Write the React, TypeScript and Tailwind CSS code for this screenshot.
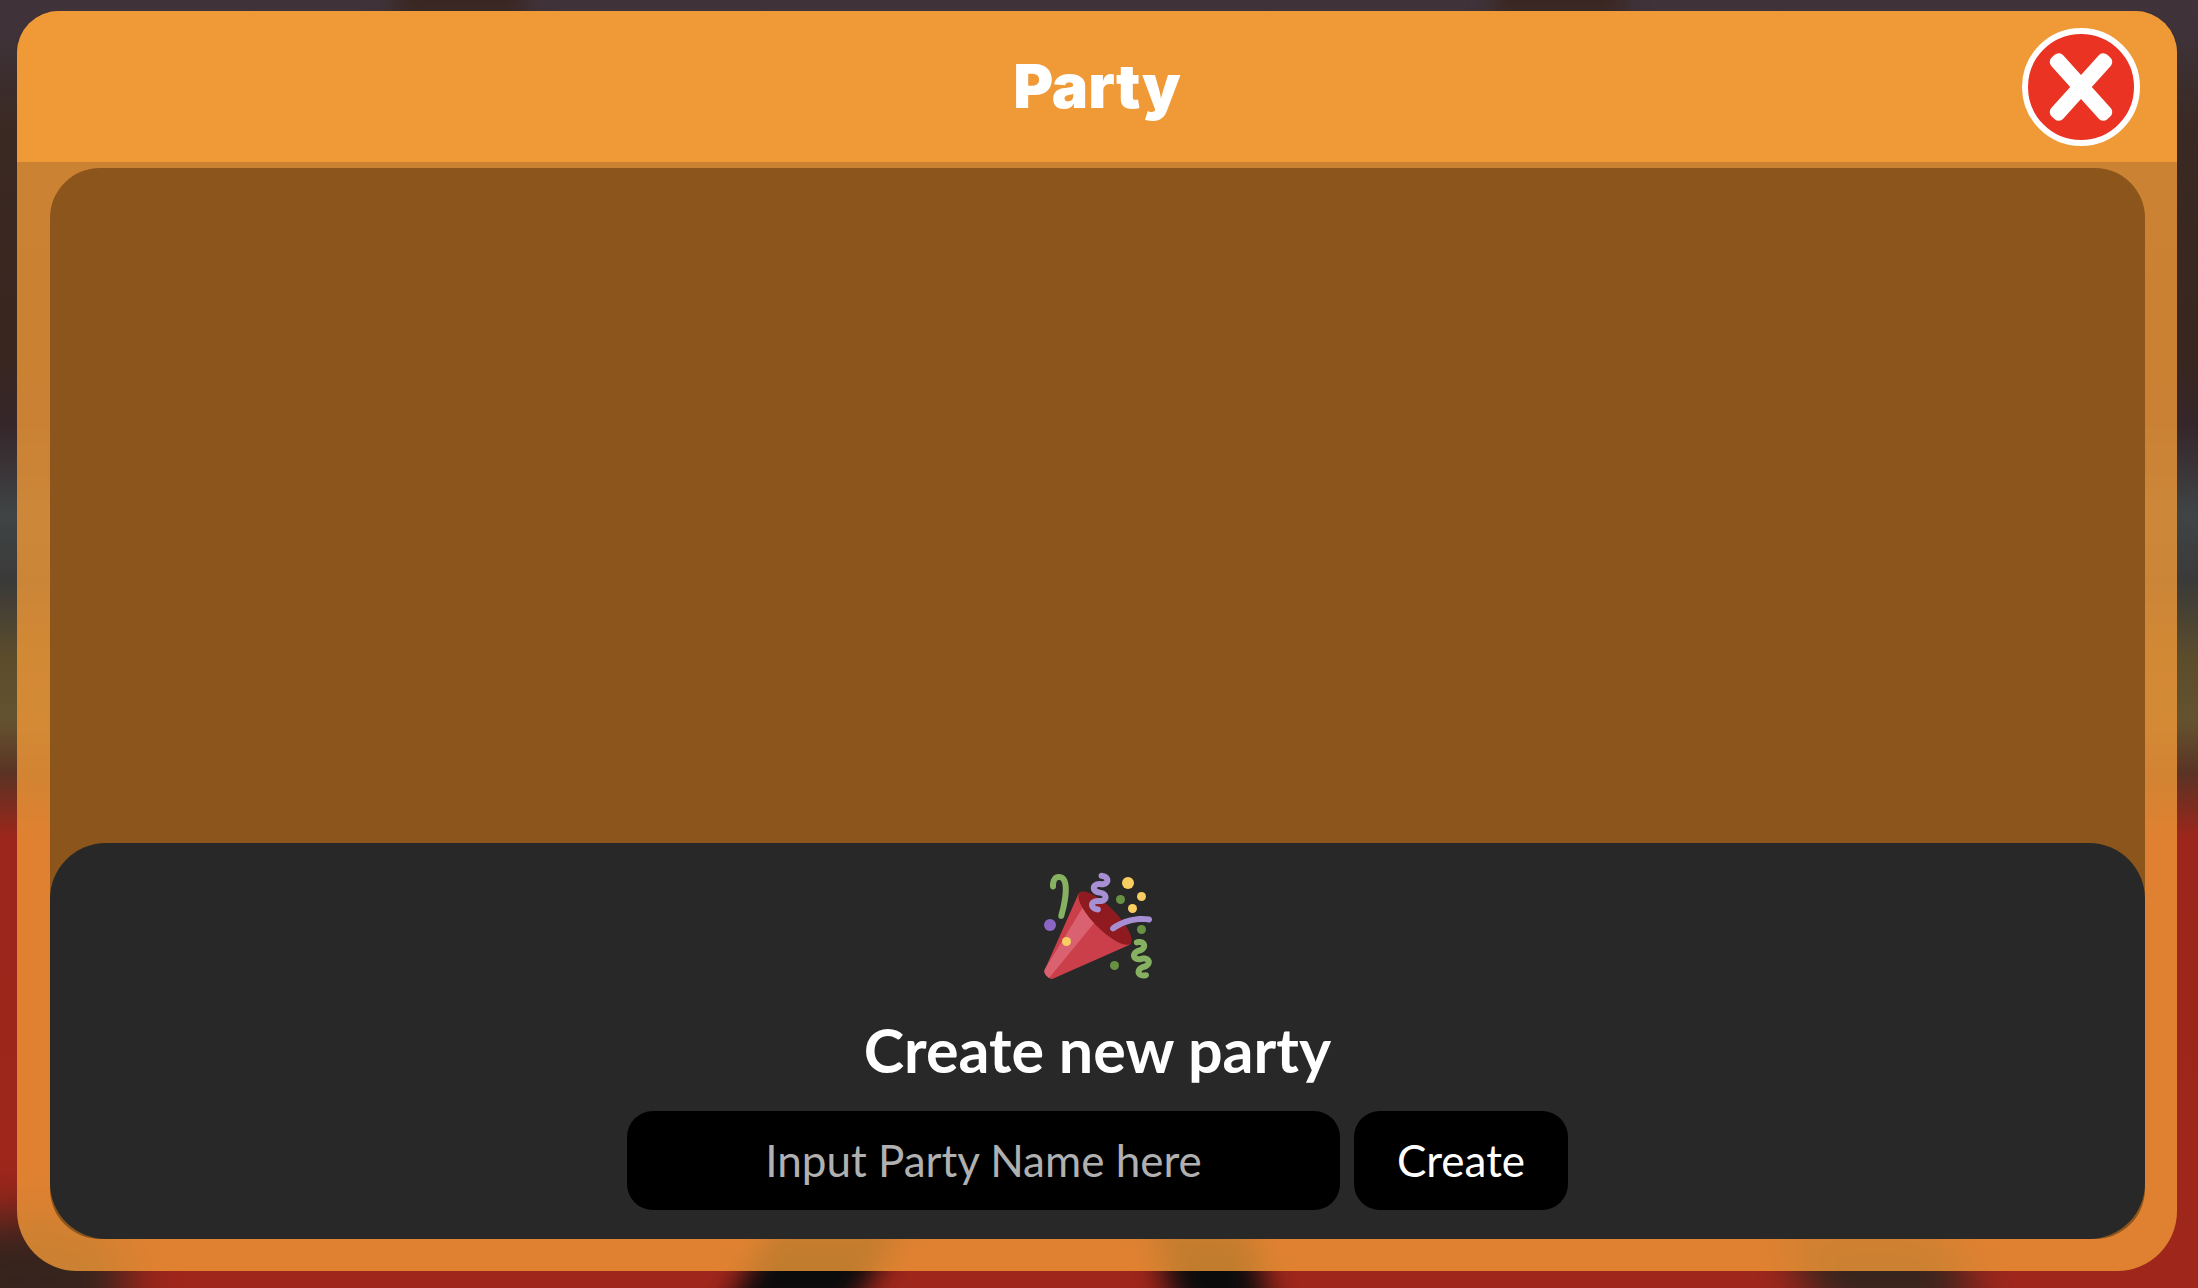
import React, { useState } from "react";

function CloseIcon() {
  return (
    <svg
      viewBox="-34 -34 68 68"
      className="size-[68px] shrink-0"
      fill="#fff"
      aria-hidden="true"
    >
      <rect x="-41.5" y="-8" width="83" height="16" rx="6" transform="rotate(48)" />
      <rect x="-41.5" y="-8" width="83" height="16" rx="6" transform="rotate(-48)" />
    </svg>
  );
}

function PartyPopper() {
  return (
    <svg viewBox="0 0 36 36" className="size-[108px]" aria-hidden="true">
      <path
        fill="#ca3f49"
        d="M11.626 7.488c-.112.112-.197.247-.268.395l-.008-.008L.134 33.141l.011.011c-.208.403.14 1.223.853 1.937.713.713 1.533 1.061 1.936.853l.01.01L28.21 24.735l-.008-.009c.147-.07.282-.155.395-.269 1.562-1.562-.971-6.627-5.656-11.313-4.687-4.686-9.752-7.218-11.315-5.656z"
      />
      <path
        fill="#da6270"
        d="M13 12L.416 32.506l-.282.635.011.011c-.208.403.14 1.223.853 1.937.232.232.473.408.709.557L17 17l-4-5z"
      />
      <path
        fill="#8f1b20"
        d="M23.012 13.066c4.67 4.672 7.263 9.652 5.789 11.124-1.473 1.474-6.453-1.118-11.126-5.788-4.671-4.672-7.263-9.654-5.79-11.127 1.474-1.473 6.454 1.119 11.127 5.791z"
      />
      <path
        fill="#a68fd3"
        d="M18.59 13.609c-.199.161-.459.245-.734.215-.868-.094-1.598-.396-2.109-.873-.541-.505-.808-1.183-.735-1.862.128-1.192 1.324-2.286 3.363-2.066.793.085 1.147-.17 1.159-.292.014-.121-.277-.446-1.07-.532-.868-.094-1.598-.396-2.11-.873-.541-.505-.809-1.183-.735-1.862.13-1.192 1.325-2.286 3.362-2.065.578.062.883-.057 1.012-.134.103-.063.144-.123.148-.158.012-.121-.275-.446-1.07-.532-.549-.06-.947-.552-.886-1.102.059-.549.55-.946 1.101-.886 2.037.219 2.973 1.542 2.844 2.735-.13 1.194-1.325 2.286-3.364 2.067-.578-.063-.88.057-1.01.134-.103.062-.145.123-.149.157-.013.122.276.446 1.071.532 2.037.22 2.973 1.542 2.844 2.735-.129 1.192-1.324 2.286-3.362 2.065-.578-.062-.882.058-1.012.134-.104.064-.144.124-.148.158-.013.121.276.446 1.07.532.548.06.947.553.886 1.102-.028.274-.167.511-.366.671z"
      />
      <path
        fill="#86b160"
        d="M30.661 22.857c1.973-.557 3.334.323 3.658 1.478.324 1.154-.378 2.615-2.35 3.17-.77.216-1.001.584-.97.701.034.118.425.312 1.193.095 1.972-.555 3.333.325 3.657 1.479.326 1.155-.378 2.614-2.351 3.17-.769.216-1.001.585-.967.702.033.117.423.311 1.192.095.53-.149 1.084.16 1.233.691.148.532-.161 1.084-.693 1.234-1.971.555-3.333-.323-3.659-1.479-.324-1.154.379-2.613 2.353-3.169.77-.217 1.001-.584.967-.702-.032-.117-.422-.312-1.19-.096-1.974.556-3.334-.322-3.659-1.479-.325-1.154.378-2.613 2.351-3.17.768-.215.999-.585.967-.701-.034-.118-.423-.312-1.192-.096-.532.15-1.083-.16-1.233-.691-.149-.53.161-1.082.693-1.232z"
      />
      <path
        fill="#a68fd3"
        d="M23.001 20.16c-.294 0-.584-.129-.782-.375-.345-.432-.274-1.061.156-1.406.218-.175 5.418-4.259 12.767-3.208.547.078.927.584.849 1.131-.078.546-.58.93-1.132.848-6.493-.922-11.187 2.754-11.233 2.791-.186.148-.406.219-.625.219z"
      />
      <path
        fill="#86b160"
        d="M5.754 16c-.095 0-.192-.014-.288-.042-.529-.159-.829-.716-.67-1.245 1.133-3.773 2.16-9.794.898-11.364-.141-.178-.354-.353-.842-.316-.938.072-.849 2.051-.848 2.071.042.551-.372 1.031-.922 1.072-.559.034-1.031-.372-1.072-.923-.103-1.379.326-4.035 2.692-4.214 1.056-.08 1.933.287 2.552 1.057 2.371 2.951-.036 11.506-.542 13.192-.13.433-.528.712-.958.712z"
      />
      <circle fill="#689243" cx="25.5" cy="9.5" r="1.5" />
      <circle fill="#8b66c5" cx="2" cy="18" r="2" />
      <circle fill="#689243" cx="32.5" cy="19.5" r="1.5" />
      <circle fill="#689243" cx="23.5" cy="31.5" r="1.5" />
      <circle fill="#f9ce61" cx="28" cy="4" r="2" />
      <circle fill="#f9ce61" cx="32.5" cy="8.5" r="1.5" />
      <circle fill="#f9ce61" cx="29.5" cy="12.5" r="1.5" />
      <circle fill="#f9ce61" cx="7.5" cy="23.5" r="1.5" />
    </svg>
  );
}

// Out of focus game scene behind the window
function Backdrop() {
  return (
    <div className="absolute inset-0 -z-10 overflow-hidden bg-[linear-gradient(#40333a_0%,#3e3238_3%,#3a2922_10%,#38261f_28%,#35262a_33%,#404445_40%,#3a3a39_45%,#5b4c2c_51%,#64522f_56%,#5a3324_60%,#9c261b_65%,#9f261b_100%)]">
      <div className="absolute -bottom-14 -left-16 h-32 w-48 rounded-full bg-[#35241d] blur-xl" />
      <div className="absolute -bottom-8 left-[34%] h-24 w-32 -skew-x-[30deg] bg-[#0b0b0c] blur-lg" />
      <div className="absolute -bottom-8 left-[53%] h-24 w-24 skew-x-[15deg] bg-[#0b0b0c] blur-lg" />
      <div className="absolute -bottom-8 left-[82%] h-24 w-40 skew-x-[20deg] bg-[#35241d] blur-xl" />
      <div className="absolute -top-4 left-[18%] h-8 w-32 bg-[#38241c] blur-md" />
      <div className="absolute -top-4 left-[68%] h-8 w-32 bg-[#38241c] blur-md" />
    </div>
  );
}

export default function App() {
  const [partyName, setPartyName] = useState("");

  return (
    <div className="relative isolate flex min-h-screen pt-[11px] pr-[21px] pb-[17px] pl-[17px] font-['Lato','Noto_Sans',sans-serif] text-white">
      <Backdrop />
      <main className="flex flex-1 flex-col overflow-hidden rounded-t-[42px] rounded-b-[60px] bg-[#f09837]/80">
        <header className="grid h-[151px] grid-cols-[1fr_auto_1fr] items-center bg-[#f09937] px-[37px]">
          <h1 className="col-start-2 font-['Inter',sans-serif] text-[61px] leading-none font-black">
            Party
          </h1>
          <button
            aria-label="Close"
            className="flex size-[118px] items-center justify-center justify-self-end rounded-full border-6 border-white bg-[#ea3323]"
          >
            <CloseIcon />
          </button>
        </header>
        <section className="mr-8 mb-8 ml-[33px] mt-1.5 flex flex-1 flex-col justify-end rounded-[50px] bg-[#8b551b]">
          <form
            onSubmit={(e) => e.preventDefault()}
            className="flex flex-col items-center rounded-[56px] bg-[#282828] pt-7 pb-[29px]"
          >
            <PartyPopper />
            <h2 className="mt-[30px] mb-5 text-[61px] leading-[82px] font-bold">
              Create new party
            </h2>
            <div className="flex gap-3.5">
              <input
                type="text"
                aria-label="Party name"
                placeholder="Input Party Name here"
                value={partyName}
                onChange={(e) => setPartyName(e.target.value)}
                className="h-[99px] w-[713px] rounded-[26px] bg-black pb-0.5 text-center text-[44px] outline-none placeholder:text-[#b0b0b0]"
              />
              <button
                type="submit"
                className="h-[99px] w-[214px] rounded-[26px] bg-black pb-0.5 text-[44px]"
              >
                Create
              </button>
            </div>
          </form>
        </section>
      </main>
    </div>
  );
}
